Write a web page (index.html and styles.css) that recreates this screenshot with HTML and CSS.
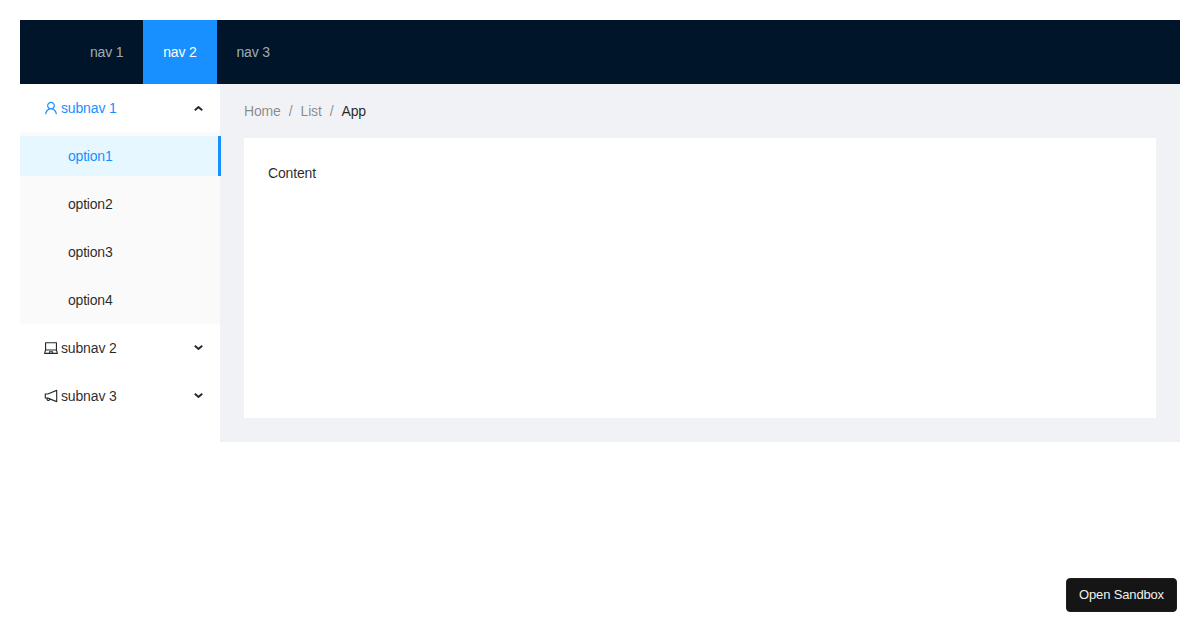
FILE: index.html
```html
<!DOCTYPE html>
<html lang="en">
<head>
<meta charset="utf-8">
<title>Layout</title>
<link rel="stylesheet" href="styles.css">
</head>
<body>
<div class="layout">
  <header class="header">
    <nav class="top-menu">
      <a class="top-item">nav 1</a>
      <a class="top-item selected">nav 2</a>
      <a class="top-item">nav 3</a>
    </nav>
  </header>
  <div class="below">
    <aside class="sider">
      <div class="sub-title open">
        <svg class="icon" viewBox="64 64 896 896" fill="currentColor"><path d="M858.5 763.6a374 374 0 0 0-80.6-119.5 375.63 375.63 0 0 0-119.5-80.6c-.4-.2-.8-.3-1.2-.5C719.5 518 760 444.7 760 362c0-137-111-248-248-248S264 225 264 362c0 82.7 40.5 156 102.8 201.1-.4.2-.8.3-1.2.5-44.8 18.9-85 46-119.5 80.6a375.63 375.63 0 0 0-80.6 119.5A371.7 371.7 0 0 0 136 901.8a8 8 0 0 0 8 8.2h60c4.4 0 7.9-3.5 8-7.8 2-77.2 33-149.5 87.8-204.3 56.7-56.7 132-87.9 212.2-87.9s155.5 31.2 212.2 87.9C779 752.7 810 825 812 902.2c.1 4.4 3.6 7.8 8 7.8h60a8 8 0 0 0 8-8.2c-1-47.8-10.9-94.3-29.5-138.2zM512 534c-45.9 0-89.1-17.9-121.6-50.4S340 407.9 340 362c0-45.9 17.9-89.1 50.4-121.6S466.1 190 512 190s89.1 17.9 121.6 50.4S684 316.1 684 362c0 45.9-17.9 89.1-50.4 121.6S557.9 534 512 534z"/></svg>
        <span class="sub-label">subnav 1</span>
        <svg class="chevron" viewBox="0 0 9 5"><path d="M.8 4.2 4.5 1.1l3.7 3.1"/></svg>
      </div>
      <ul class="sub-list">
        <li class="option active">option1</li>
        <li class="option">option2</li>
        <li class="option">option3</li>
        <li class="option">option4</li>
      </ul>
      <div class="sub-title">
        <svg class="icon" viewBox="64 64 896 896" fill="currentColor"><path d="M956.9 845.1L896.4 632V168c0-17.7-14.3-32-32-32h-704c-17.7 0-32 14.3-32 32v464L67.9 845.1C60.4 866 75.8 888 98 888h828.8c22.2 0 37.6-22 30.1-42.9zM200.4 208h624v395h-624V208zm228.3 608l8.1-37h150.3l8.1 37H428.7zm224 0l-19.1-86.7c-.8-3.7-4.1-6.3-7.8-6.3H398.2c-3.8 0-7 2.6-7.8 6.3L371.3 816H151l42.3-149h638.2l42.3 149H652.7z"/></svg>
        <span class="sub-label">subnav 2</span>
        <svg class="chevron down" viewBox="0 0 9 5"><path d="M.8.8 4.5 3.9 8.2.8"/></svg>
      </div>
      <div class="sub-title">
        <svg class="icon" viewBox="64 64 896 896" fill="currentColor"><path d="M880 112c-3.8 0-7.7.7-11.6 2.3L292 345.9H128c-8.8 0-16 7.4-16 16.6v299c0 9.2 7.2 16.6 16 16.6h101.7c-3.7 11.6-5.7 23.9-5.7 36.4 0 65.9 53.8 119.5 120 119.5 55.4 0 102.1-37.6 115.9-88.4l408.6 164.2c3.9 1.5 7.8 2.3 11.6 2.3 16.9 0 32-14.2 32-33.2V145.2C912 126.2 897 112 880 112zM344 762.3c-26.5 0-48-21.4-48-47.8 0-11.2 3.9-21.9 11-30.4l84.9 34.1c-2 24.6-22.7 44.1-47.9 44.1zm496 58.4L318.8 611.3l-12.9-5.2H184V417.9h121.9l12.9-5.2L840 203.3v617.4z"/></svg>
        <span class="sub-label">subnav 3</span>
        <svg class="chevron down" viewBox="0 0 9 5"><path d="M.8.8 4.5 3.9 8.2.8"/></svg>
      </div>
    </aside>
    <main class="main">
      <div class="breadcrumb">
        <span class="crumb">Home</span><span class="sep">/</span><span class="crumb">List</span><span class="sep">/</span><span class="crumb last">App</span>
      </div>
      <section class="content">Content</section>
    </main>
  </div>
</div>
<button class="sandbox">Open Sandbox</button>
</body>
</html>
```
FILE: styles.css
```css
* { box-sizing: border-box; }
html, body { margin: 0; padding: 0; background: #fff; }
body {
  font-family: "Liberation Sans", Arial, sans-serif;
  font-size: 14px;
  line-height: 22px;
  letter-spacing: -0.15px;
  color: rgba(0, 0, 0, .85);
  padding: 20px;
  height: 630px;
  overflow: hidden;
}
.layout { display: flex; flex-direction: column; }
.header { height: 64px; background: #001529; padding: 0 50px; }
.top-menu { display: flex; height: 64px; }
.top-item {
  padding: 0 20px;
  line-height: 64px;
  letter-spacing: -0.2px;
  color: rgba(255, 255, 255, .65);
}
.top-item.selected { background: #1890ff; color: #fff; }
.below { display: flex; }
.sider { width: 200px; flex: none; background: #fff; }
.sub-title {
  display: flex;
  align-items: center;
  height: 40px;
  margin: 4px 0;
  padding: 0 17px 0 24px;
  line-height: 40px;
}
.sub-title + .sub-title { margin-top: 8px; }
.sub-title.open { color: #1890ff; }
.icon { width: 14px; height: 14px; flex: none; margin-right: 3px; }
.sub-label { flex: 1; }
.chevron {
  width: 9px;
  height: 5px;
  flex: none;
  fill: none;
  stroke: rgba(0, 0, 0, .85);
  stroke-width: 2;
}
.chevron.down { margin-top: -1px; }
.sub-list {
  list-style: none;
  margin: 0;
  padding: 4px 0;
  background: #fafafa;
  display: flex;
  flex-direction: column;
  gap: 8px;
}
.option {
  position: relative;
  height: 40px;
  line-height: 40px;
  padding-left: 48px;
  letter-spacing: -0.2px;
}
.option.active {
  background: #e6f7ff;
  color: #1890ff;
  margin-right: -1px;
}
.option.active::after {
  content: "";
  position: absolute;
  top: 0;
  right: 0;
  bottom: 0;
  border-right: 3px solid #1890ff;
}
.main {
  flex: 1;
  background: #f0f2f5;
  padding: 0 24px 24px;
}
.breadcrumb { margin: 16px 0; color: rgba(0, 0, 0, .45); }
.sep { margin: 0 8px; }
.crumb.last { color: rgba(0, 0, 0, .85); }
.content { background: #fff; padding: 24px; height: 280px; }
.sandbox {
  position: fixed;
  left: 1066px;
  top: 578px;
  width: 111px;
  height: 34px;
  padding: 0 0 2px;
  border: 1px solid #1f1f1f;
  border-radius: 4px;
  background: #151515;
  color: #f0f0f0;
  font-family: "Liberation Sans", Arial, sans-serif;
  font-size: 13px;
  letter-spacing: -0.15px;
}
```
